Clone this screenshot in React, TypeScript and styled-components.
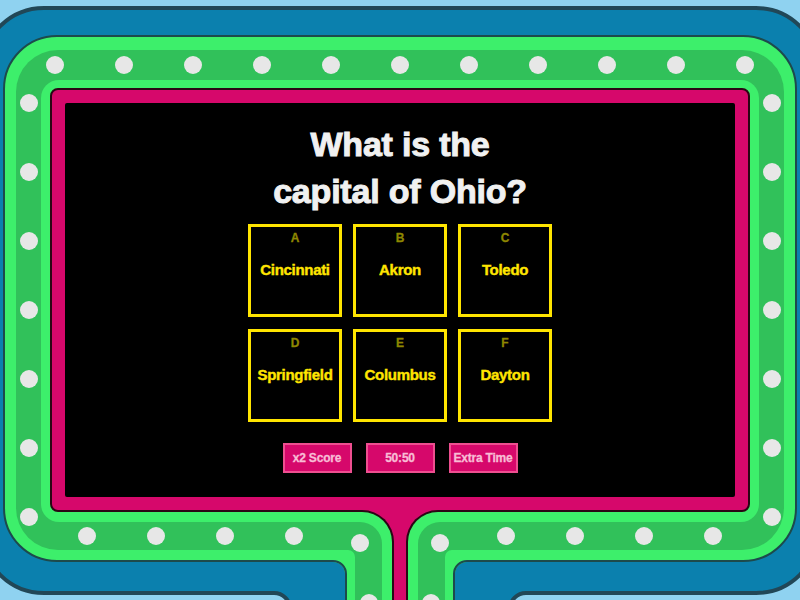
import styled, { createGlobalStyle } from "styled-components";

const colors = {
  sky: "#8fd2f0",
  cabinet: "#0b80ae",
  cabinetEdge: "#214757",
  lime: "#3def6b",
  green: "#31c15a",
  tubeEdge: "#1d4a4c",
  bulb: "#e7e7e7",
  pink: "#d6086b",
  pinkEdge: "#2a0614",
  yellow: "#ffe500",
  olive: "#8e8700",
};

const GlobalStyle = createGlobalStyle`
  html, body {
    margin: 0;
    padding: 0;
    background: ${colors.sky};
  }
  body {
    font-family: "Liberation Sans", Arial, sans-serif;
  }
`;

const Page = styled.div`
  position: relative;
  width: 800px;
  height: 600px;
  overflow: hidden;
  background: ${colors.sky};
  padding-top: 6px;
  box-sizing: border-box;
`;

const Cabinet = styled.div`
  margin: 0 -20px;
  height: 589px;
  box-sizing: border-box;
  border: 4px solid ${colors.cabinetEdge};
  border-radius: 64px;
  background: ${colors.cabinet};
  padding: 25px 19px 29px;
`;

const Tube = styled.div`
  height: 100%;
  box-sizing: border-box;
  border: 2px solid ${colors.tubeEdge};
  border-radius: 54px;
  background: ${colors.lime};
  padding: 13px 11px 10px;
`;

const BulbTrack = styled.div`
  height: 100%;
  border-radius: 42px;
  background: ${colors.green};
  display: grid;
  grid-template-columns: 25px 1fr 25px;
  grid-template-rows: 30px 1fr 28px;
  grid-template-areas:
    "left top right"
    "left rim right"
    "left bottom right";
`;

const Bulb = styled.span`
  display: block;
  width: 18px;
  height: 18px;
  border-radius: 50%;
  background: ${colors.bulb};
`;

const TopBulbs = styled.div`
  grid-area: top;
  display: flex;
  justify-content: space-between;
  align-items: center;
  padding: 0 5px;
`;

const SideBulbs = styled.div<{ $side: "left" | "right" }>`
  grid-area: ${({ $side }) => $side};
  display: flex;
  flex-direction: column;
  justify-content: space-between;
  align-items: center;
  padding: 44px 0 24px;
`;

const BottomBulbs = styled.div`
  grid-area: bottom;
  display: flex;
  justify-content: space-between;
  align-items: center;
  padding: 0 37px;
`;

const BulbGroup = styled.div`
  display: flex;
  gap: 51px;
`;

const Rim = styled.div`
  grid-area: rim;
  border-radius: 18px;
  background: ${colors.lime};
  padding: 8px 9px 10px;
`;

const Bezel = styled.div`
  height: 100%;
  box-sizing: border-box;
  border: 2px solid ${colors.pinkEdge};
  border-radius: 8px;
  background: ${colors.pink};
  padding: 13px;
`;

const Screen = styled.div`
  height: 100%;
  box-sizing: border-box;
  background: #000;
  border-radius: 2px;
  display: flex;
  flex-direction: column;
  align-items: center;
  padding-top: 18px;
`;

const Question = styled.h1`
  margin: 0;
  color: #f1f1f1;
  -webkit-text-stroke: 1px #f1f1f1;
  font-size: 34px;
  line-height: 47px;
  font-weight: 700;
  letter-spacing: -0.2px;
  text-align: center;
`;

const AnswerGrid = styled.div`
  margin-top: 9px;
  display: grid;
  grid-template-columns: repeat(3, 94px);
  grid-auto-rows: 93px;
  gap: 12px 11px;
`;

const AnswerCard = styled.div`
  box-sizing: border-box;
  border: 3px solid ${colors.yellow};
  display: flex;
  flex-direction: column;
  align-items: center;
  padding-top: 4px;
`;

const AnswerLetter = styled.span`
  color: ${colors.olive};
  -webkit-text-stroke: 0.3px ${colors.olive};
  font-size: 12px;
  line-height: 14px;
  font-weight: 700;
`;

const AnswerText = styled.span`
  margin-top: 16px;
  color: ${colors.yellow};
  -webkit-text-stroke: 0.4px ${colors.yellow};
  font-size: 15px;
  line-height: 18px;
  font-weight: 700;
  letter-spacing: -0.3px;
`;

const PowerUps = styled.div`
  margin-top: 21px;
  display: flex;
  gap: 14px;
`;

const PowerUp = styled.button`
  width: 69px;
  height: 30px;
  box-sizing: border-box;
  border: 2px solid #ee4f90;
  background: ${colors.pink};
  color: #f8bcd5;
  -webkit-text-stroke: 0.3px #f8bcd5;
  font-family: inherit;
  font-size: 12px;
  font-weight: 700;
  letter-spacing: -0.2px;
  padding: 0;
  cursor: pointer;
`;

const StandArt = styled.svg`
  position: absolute;
  left: 250px;
  top: 490px;
`;

// the bezel drops through the bottom of the bulb track like a podium neck
const Stand = () => (
  <StandArt width={300} height={110} viewBox="250 490 300 110">
    <rect x={350} y={497} width={100} height={113} fill={colors.pink} />

    <path d="M 320 510 H 362 A 32 32 0 0 1 394 542 V 610 H 320 Z" fill={colors.pinkEdge} />
    <path d="M 320 512 H 362 A 30 30 0 0 1 392 542 V 610 H 320 Z" fill={colors.lime} />
    <path
      d="M 320 522 H 360 A 22 22 0 0 1 382 544 V 610 H 355 V 557 A 7 7 0 0 0 348 550 H 320 Z"
      fill={colors.green}
    />
    <path
      d="M 250 562 H 333 A 12 12 0 0 1 345 574 V 620 H 290 V 609 A 16 16 0 0 0 274 593 H 250 Z"
      fill={colors.cabinet}
    />
    <path d="M 250 561 H 333 A 13 13 0 0 1 346 574 V 620" fill="none" stroke={colors.tubeEdge} strokeWidth={2} />
    <path d="M 250 593 H 274 A 16 16 0 0 1 290 609 V 620" fill="none" stroke={colors.cabinetEdge} strokeWidth={4} />

    <path d="M 480 510 H 438 A 32 32 0 0 0 406 542 V 610 H 480 Z" fill={colors.pinkEdge} />
    <path d="M 480 512 H 438 A 30 30 0 0 0 408 542 V 610 H 480 Z" fill={colors.lime} />
    <path
      d="M 480 522 H 440 A 22 22 0 0 0 418 544 V 610 H 445 V 557 A 7 7 0 0 1 452 550 H 480 Z"
      fill={colors.green}
    />
    <path
      d="M 550 562 H 467 A 12 12 0 0 0 455 574 V 620 H 510 V 609 A 16 16 0 0 1 526 593 H 550 Z"
      fill={colors.cabinet}
    />
    <path d="M 550 561 H 467 A 13 13 0 0 0 454 574 V 620" fill="none" stroke={colors.tubeEdge} strokeWidth={2} />
    <path d="M 550 593 H 526 A 16 16 0 0 0 510 609 V 620" fill="none" stroke={colors.cabinetEdge} strokeWidth={4} />

    <circle cx={360} cy={543} r={9} fill={colors.bulb} />
    <circle cx={440} cy={543} r={9} fill={colors.bulb} />
    <circle cx={369} cy={603} r={9} fill={colors.bulb} />
    <circle cx={431} cy={603} r={9} fill={colors.bulb} />
  </StandArt>
);

const answers = [
  { letter: "A", text: "Cincinnati" },
  { letter: "B", text: "Akron" },
  { letter: "C", text: "Toledo" },
  { letter: "D", text: "Springfield" },
  { letter: "E", text: "Columbus" },
  { letter: "F", text: "Dayton" },
];

const powerUps = ["x2 Score", "50:50", "Extra Time"];

const bulbs = (count: number) => Array.from({ length: count }, (_, i) => <Bulb key={i} />);

export default function App() {
  return (
    <>
      <GlobalStyle />
      <Page>
        <Cabinet>
          <Tube>
            <BulbTrack>
              <SideBulbs $side="left">{bulbs(7)}</SideBulbs>
              <TopBulbs>{bulbs(11)}</TopBulbs>
              <Rim>
                <Bezel>
                  <Screen>
                    <Question>
                      What is the
                      <br />
                      capital of Ohio?
                    </Question>
                    <AnswerGrid>
                      {answers.map((a) => (
                        <AnswerCard key={a.letter}>
                          <AnswerLetter>{a.letter}</AnswerLetter>
                          <AnswerText>{a.text}</AnswerText>
                        </AnswerCard>
                      ))}
                    </AnswerGrid>
                    <PowerUps>
                      {powerUps.map((p) => (
                        <PowerUp key={p}>{p}</PowerUp>
                      ))}
                    </PowerUps>
                  </Screen>
                </Bezel>
              </Rim>
              <BottomBulbs>
                <BulbGroup>{bulbs(4)}</BulbGroup>
                <BulbGroup>{bulbs(4)}</BulbGroup>
              </BottomBulbs>
              <SideBulbs $side="right">{bulbs(7)}</SideBulbs>
            </BulbTrack>
          </Tube>
        </Cabinet>
        <Stand />
      </Page>
    </>
  );
}
